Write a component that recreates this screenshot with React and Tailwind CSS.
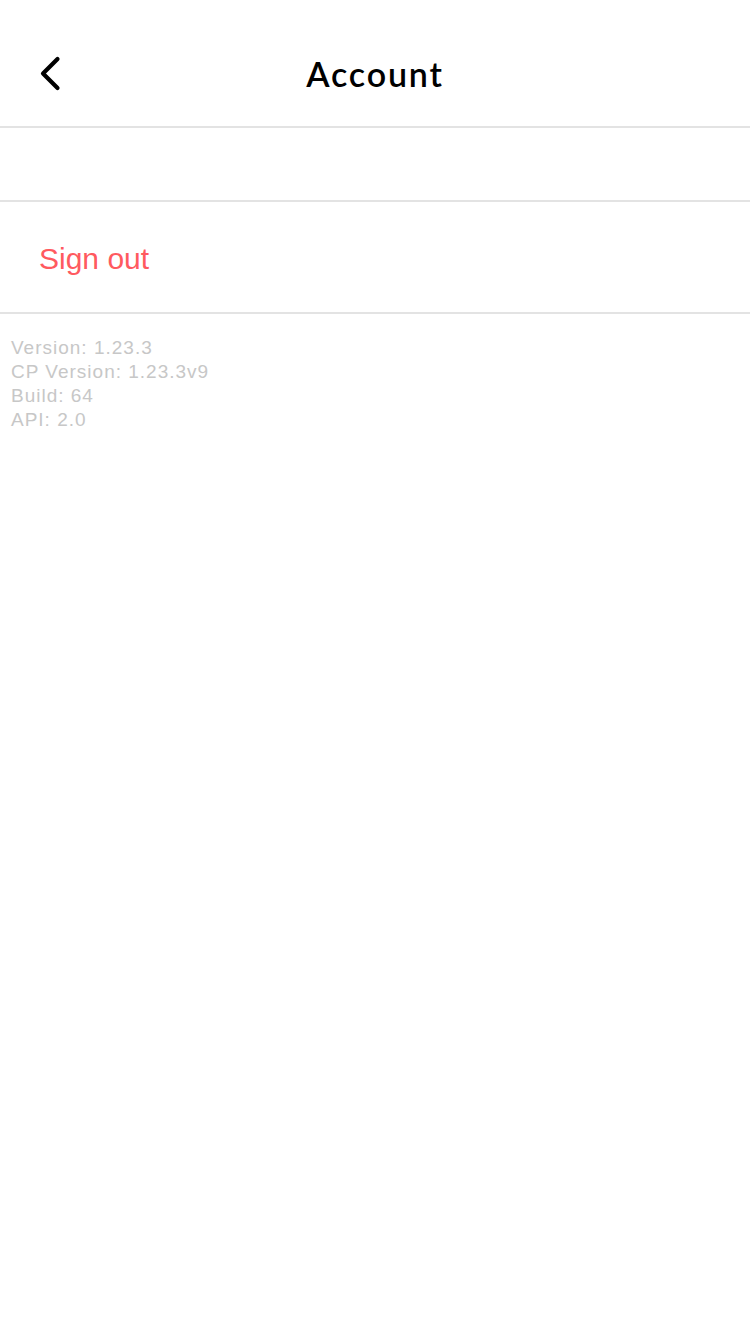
import React from "react";

export default function App() {
  return (
    <div className="w-[750px] min-h-[1334px] bg-white" style={{ fontFamily: '"Liberation Sans", Arial, sans-serif' }}>
      <div className="relative flex h-[128px] items-center justify-center border-b-2 border-[#e3e3e3]">
        <button className="absolute left-[38px] top-[55px] p-0">
          <svg width="24" height="37" viewBox="0 0 24 37" fill="none">
            <path d="M19.5 4 L5 18.5 L19.5 33" stroke="#000" strokeWidth="4.2" strokeLinecap="round" strokeLinejoin="round" />
          </svg>
        </button>
        <h1 className="mt-[21px] text-[34px] font-semibold tracking-[1.8px] text-black" style={{ fontFamily: 'Lato, "Open Sans", sans-serif' }}>
          Account
        </h1>
      </div>
      <div className="h-[74px] border-b-2 border-[#e3e3e3]"></div>
      <div className="flex h-[112px] items-center border-b-2 border-[#e3e3e3] pl-[39px]">
        <span className="mt-[2px] text-[30px] text-[#ff5a5f]">Sign out</span>
      </div>
      <div className="pl-[11px] pt-[22px] text-[19px] leading-[24px] tracking-[1px] text-[#c7c7c7]">
        <div>Version: 1.23.3</div>
        <div>CP Version: 1.23.3v9</div>
        <div>Build: 64</div>
        <div>API: 2.0</div>
      </div>
    </div>
  );
}
